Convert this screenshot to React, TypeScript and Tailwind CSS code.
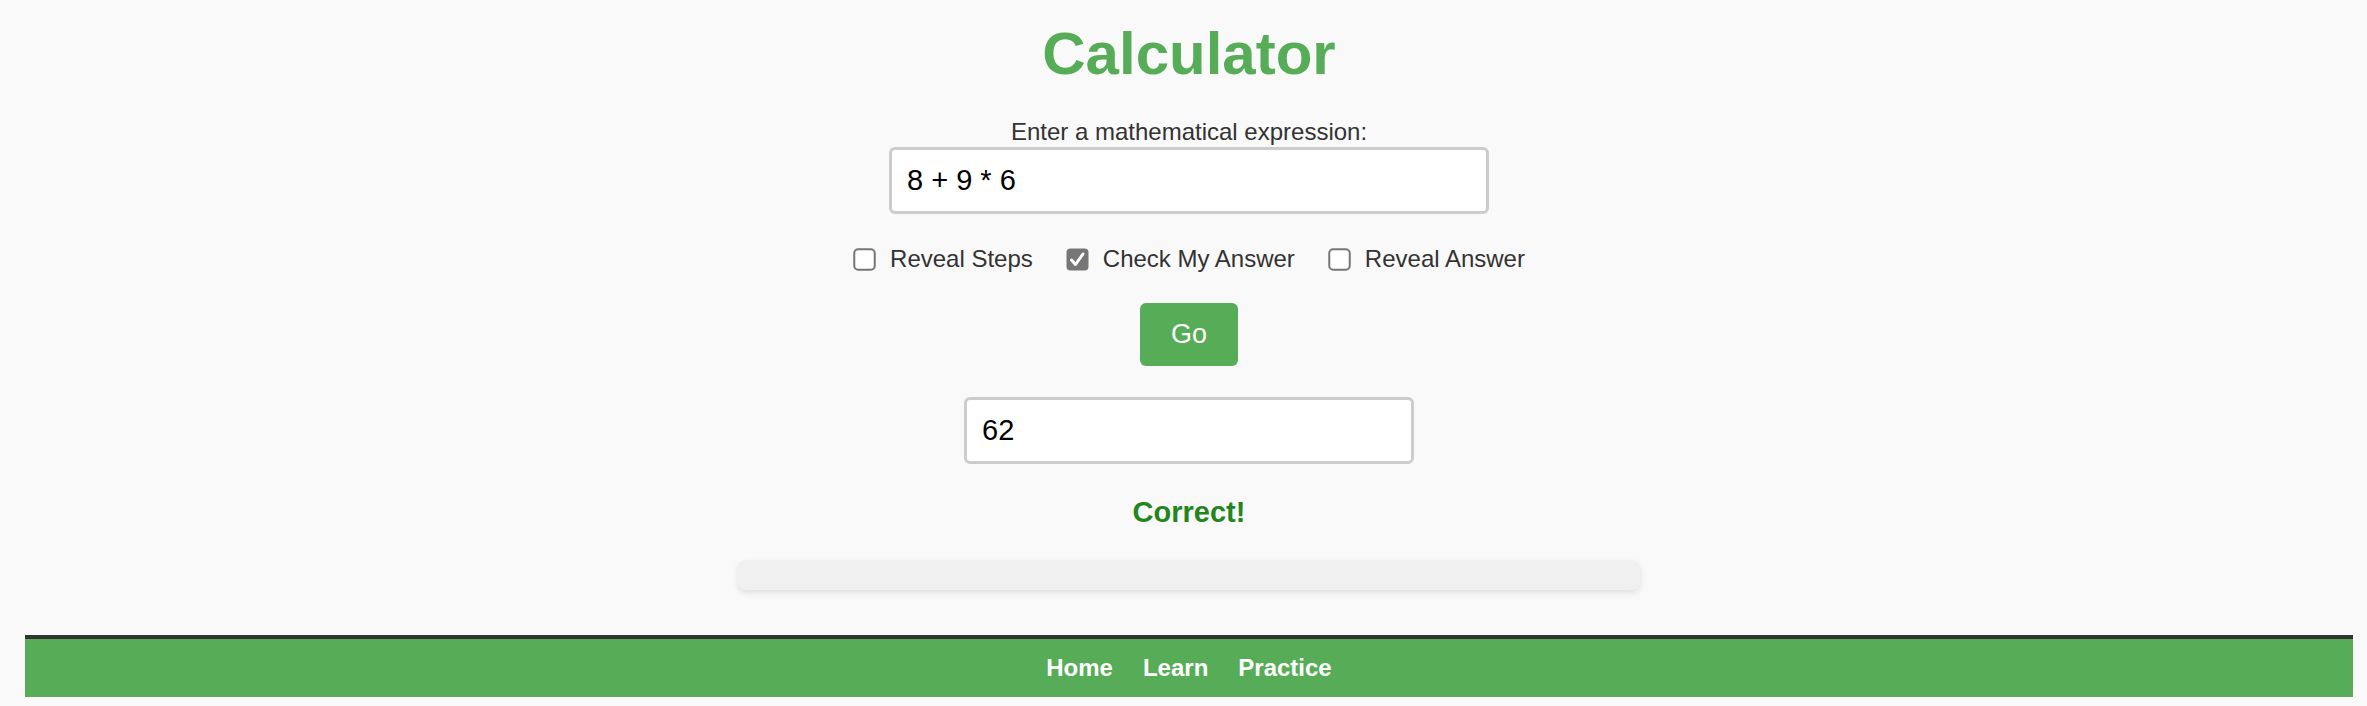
import React from 'react';

const CheckBox = ({ checked }: { checked?: boolean }) =>
  checked ? (
    <svg width="23" height="23" viewBox="0 0 23 23" className="shrink-0">
      <rect x="0.5" y="0.5" width="22" height="22" rx="4" fill="#767676" />
      <path d="M5.5 12 L9.5 16.5 L17 6" fill="none" stroke="#fff" strokeWidth="3" strokeLinecap="round" strokeLinejoin="round" />
    </svg>
  ) : (
    <svg width="23" height="23" viewBox="0 0 23 23" className="shrink-0">
      <rect x="1.25" y="1.25" width="20.5" height="20.5" rx="4" fill="#fff" stroke="#767676" strokeWidth="2" />
    </svg>
  );

const Option = ({ label, checked }: { label: string; checked?: boolean }) => (
  <label className="flex items-center gap-[14px] h-[28px] text-[24px] leading-[28px] text-[#333]">
    <CheckBox checked={checked} />
    <span>{label}</span>
  </label>
);

export default function App() {
  return (
    <div className="min-h-screen bg-[#f9f9f9] font-['Liberation_Sans',Arial,sans-serif]">
      <div className="ml-[25px] w-[2328px] pt-[19px] flex flex-col items-center">
        <h1 className="text-[60px] leading-[69px] font-bold text-[#57ad57]">Calculator</h1>

        <div className="mt-[30px] text-[24px] leading-[28px] text-[#333]">Enter a mathematical expression:</div>
        <input
          readOnly
          value="8 + 9 * 6"
          className="mt-[1px] w-[600px] h-[67px] px-[15px] bg-white border-[3px] border-[#ccc] rounded-[6px] text-[29px] text-black outline-none"
        />

        <div className="mt-[31px] flex items-center gap-[33px]">
          <Option label="Reveal Steps" />
          <Option label="Check My Answer" checked />
          <Option label="Reveal Answer" />
        </div>

        <button className="mt-[30px] w-[98px] h-[63px] rounded-[6px] bg-[#57ad57] text-white text-[27px] leading-[31px]">
          Go
        </button>

        <input
          readOnly
          value="62"
          className="mt-[31px] w-[450px] h-[67px] px-[15px] bg-white border-[3px] border-[#ccc] rounded-[6px] text-[29px] text-black outline-none"
        />

        <p className="mt-[32px] h-[33px] text-[29px] leading-[33px] font-bold text-[#23861d]">Correct!</p>

        <div className="mt-[31px] w-[902px] h-[30px] rounded-[8px] bg-[#f0f0f0] shadow-[0_3px_6px_rgba(0,0,0,0.1)]" />

        <footer className="mt-[45px] w-full h-[62px] border-t-4 border-[#333] bg-[#57ad57] flex items-center justify-center gap-[30px] text-[24px] font-bold text-white">
          <a>Home</a>
          <a>Learn</a>
          <a>Practice</a>
        </footer>
      </div>
    </div>
  );
}
